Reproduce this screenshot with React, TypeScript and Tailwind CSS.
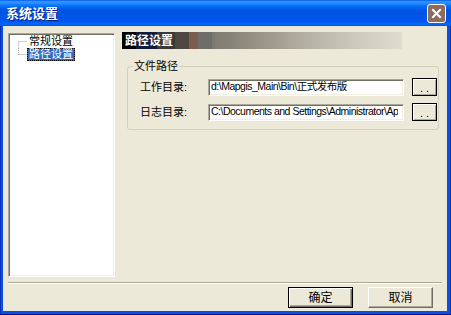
import React from 'react';

const sunken =
  'border border-t-[#aca899] border-l-[#aca899] border-b-white border-r-white shadow-[inset_1px_1px_0_#716f64,inset_-1px_-1px_0_#f1efe2]';

function TreeLine({ first }: { first: boolean }) {
  return (
    <svg width="17" height="13" className="shrink-0">
      <line
        x1="8.5"
        y1={first ? 6.5 : 0}
        x2="8.5"
        y2={first ? 13 : 7}
        stroke="#a0a0a0"
        strokeDasharray="1 1"
      />
      <line x1="8.5" y1="6.5" x2="17" y2="6.5" stroke="#a0a0a0" strokeDasharray="1 1" />
    </svg>
  );
}

function PathRow({ label, value }: { label: string; value: string }) {
  return (
    <div className="flex items-center h-[18px]">
      <div className="w-[80px] pl-[12px] text-[11px] leading-[13px] text-black">{label}</div>
      <div className={`w-[196px] h-[17px] bg-white overflow-hidden flex items-center ${sunken}`}>
        <span className="pl-[2px] text-[10.5px] tracking-[-0.5px] whitespace-nowrap overflow-hidden text-black">
          {value}
        </span>
      </div>
      <button className="ml-[8px] w-[25px] h-[18px] border border-black bg-[#ece9d8] shadow-[inset_1px_1px_0_#fff,inset_-1px_-1px_0_#aca899] flex items-center justify-center text-[11px] leading-none pt-[3px] text-black">
        . .
      </button>
    </div>
  );
}

export default function App() {
  return (
    <div className="w-[451px] h-[315px] flex flex-col bg-[#0a4fe4] shadow-[inset_0_-1px_0_#00138c,inset_1px_0_0_#0831b8,inset_-1px_0_0_#0831b8] font-['Liberation_Sans','Noto_Sans_CJK_SC',sans-serif] select-none">
      {/* Title bar */}
      <div className="h-[26px] shrink-0 flex items-center justify-between pl-[6px] pr-[5px] bg-[linear-gradient(to_bottom,#0058ee_0%,#3593ff_6%,#288eff_12%,#127dff_18%,#036ffc_24%,#0262ee_30%,#0057e5_38%,#0054e3_50%,#0055eb_78%,#005bf5_86%,#026afe_92%,#0062ef_96%,#0052d6_100%)]">
        <span className="text-white font-bold text-[13px] leading-none [text-shadow:1px_1px_0_#0a1883]">
          系统设置
        </span>
        <div className="w-[19px] h-[19px] rounded-[3px] border border-white bg-[#8f6b5c] flex items-center justify-center">
          <svg width="11" height="11" viewBox="0 0 11 11">
            <path d="M2 2 L9 9 M9 2 L2 9" stroke="#fff" strokeWidth="2" strokeLinecap="square" />
          </svg>
        </div>
      </div>

      {/* Body */}
      <div className="flex-1 ml-[3px] mr-[4px] mb-[4px] bg-[#ece9d8] flex flex-col pt-[6px] px-[5px]">
        <div className="flex h-[245px]">
          {/* Tree */}
          <div className={`mt-[1px] w-[107px] h-[244px] bg-white p-px flex flex-col ${sunken}`}>
            <div className="flex items-center h-[13px]">
              <TreeLine first />
              <span className="px-px border border-transparent text-[11px] leading-[11px] text-black">常规设置</span>
            </div>
            <div className="flex items-center h-[13px]">
              <TreeLine first={false} />
              <span className="px-px h-[13px] flex items-center border border-dotted border-black bg-[#316ac5] text-[11px] leading-[11px] text-white">
                路径设置
              </span>
            </div>
          </div>

          {/* Right pane */}
          <div className="ml-[7px] flex-1 flex flex-col">
            <div className="w-[280px] h-[17px] flex items-center pl-[3px] bg-[linear-gradient(to_right,#000_0_5%,#131a3a_5%_12.5%,#3a3935_12.5%_19%,#4f4842_19%_24%,#7b5d50_24%_27%,#6f6d67_27%_32%,#7d7a72_32%,#928c80_45%,#a39d8f_55%,#b8b4a8_68%,#cfccbf_85%,#dedbcf_100%)]">
              <span className="text-white font-bold text-[12px] leading-none">路径设置</span>
            </div>

            <div className="relative mt-[17px] ml-[5px] w-[312px] h-[64px] border border-[#d0d0bf] rounded-[3px] pt-[11px] flex flex-col gap-[7px]">
              <span className="absolute -top-[7px] left-[5px] px-px bg-[#ece9d8] text-[11px] leading-[13px] text-black">
                文件路径
              </span>
              <PathRow label="工作目录:" value="d:\Mapgis_Main\Bin\正式发布版" />
              <PathRow label="日志目录:" value="C:\Documents and Settings\Administrator\Ap" />
            </div>
          </div>
        </div>

        {/* Separator */}
        <div className="mt-[5px] h-[2px] border-t border-t-[#aca899] border-b border-b-white" />

        {/* Buttons */}
        <div className="mt-[3px] flex justify-end gap-[15px] pr-[9px]">
          <button className="w-[65px] h-[21px] border border-black bg-[#ece9d8] shadow-[inset_1px_1px_0_#fff,inset_-1px_-1px_0_#716f64,inset_-2px_-2px_0_#aca899] text-[12px] leading-none text-black">
            确定
          </button>
          <button className="w-[65px] h-[21px] border border-t-white border-l-white border-b-[#716f64] border-r-[#716f64] bg-[#ece9d8] shadow-[inset_-1px_-1px_0_#aca899] text-[12px] leading-none text-black">
            取消
          </button>
        </div>
      </div>
    </div>
  );
}
